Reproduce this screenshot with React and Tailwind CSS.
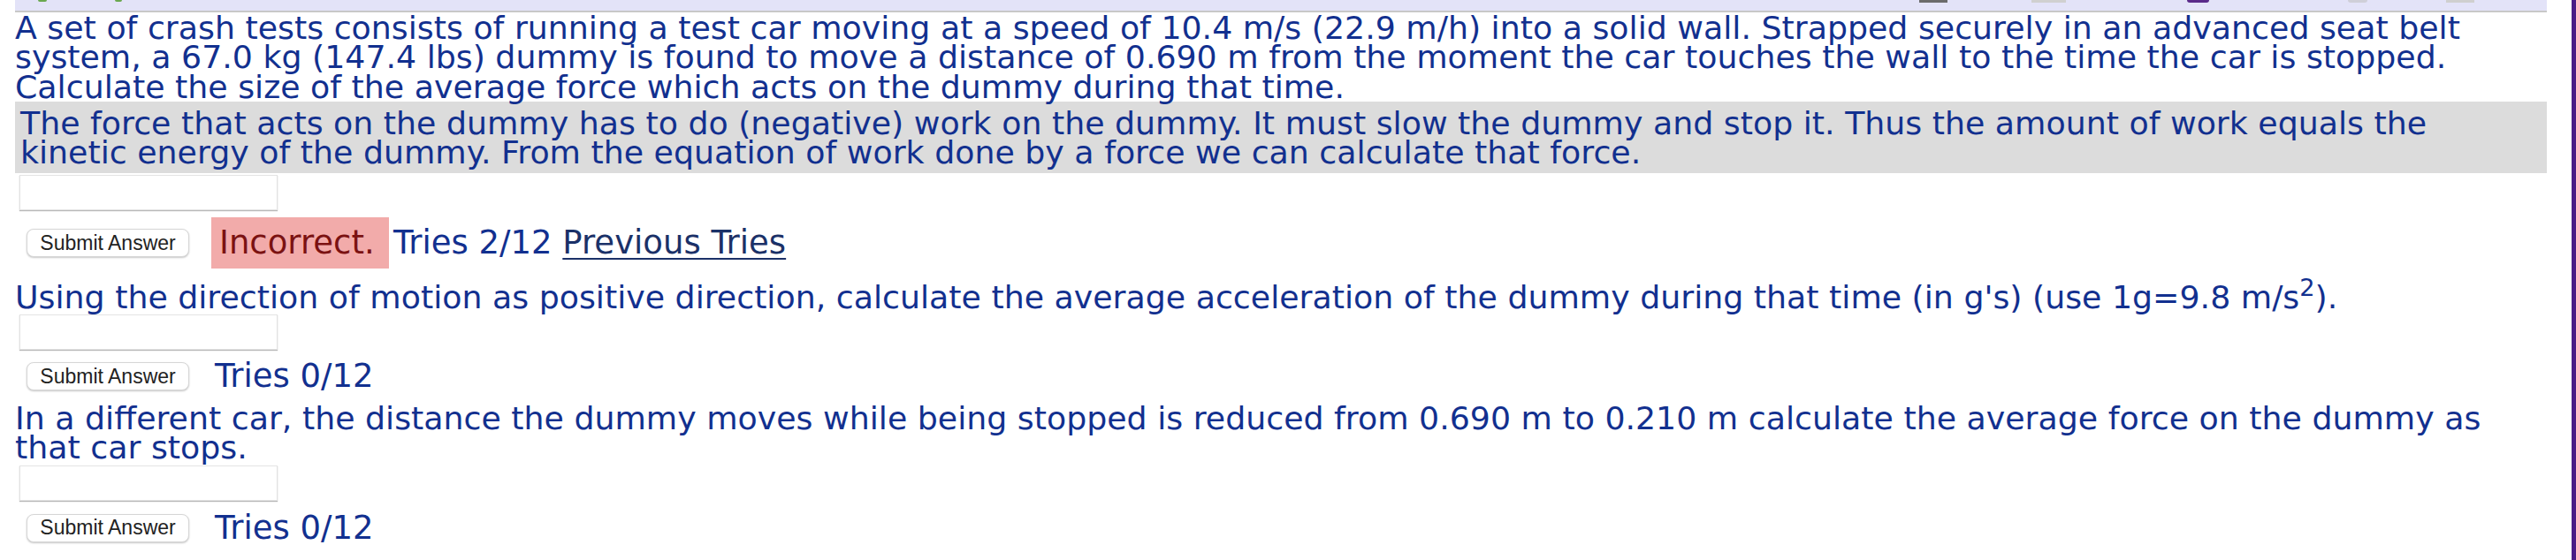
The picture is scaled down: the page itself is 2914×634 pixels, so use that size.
import React from "react";

function AnswerInput({ className = "" }) {
  return (
    <input
      type="text"
      className={
        "block ml-[5px] w-[292px] h-[40px] bg-white border border-[#e3e3e3] shadow-[0_1px_1px_rgba(0,0,0,0.28)] outline-none " +
        className
      }
    />
  );
}

function SubmitButton() {
  return (
    <button
      type="button"
      className="shrink-0 w-[184px] h-[32px] rounded-[8px] border border-[#d6d6d6] bg-white shadow-[0_1px_2px_rgba(0,0,0,0.22)] font-['Liberation_Sans',Arial,sans-serif] text-[23px] leading-none text-[#222222]"
    >
      Submit Answer
    </button>
  );
}

export default function App() {
  return (
    <div className="w-[2914px] h-[634px] bg-white flex overflow-hidden">
      <div className="w-[2909px] pl-[17px] pr-[28px] font-['DejaVu_Sans',Verdana,sans-serif] text-[36.3px] leading-[33.4px] text-[#12308f]">
        {/* header strip (toolbar icons cut off at top) */}
        <div className="h-[14px] bg-[#e3e3f8] border-b-2 border-[#c8c8c8] flex items-start">
          <span className="ml-[26px] w-[10px] h-[2px] rounded-b-full bg-[#6aa84f]" />
          <span className="ml-[77px] w-[8px] h-[2px] rounded-b-full bg-[#6aa84f]" />
          <span className="ml-[2033px] w-[32px] h-[3px] bg-[#6b6b6b]" />
          <span className="ml-[95px] w-[39px] h-[3px] bg-[#d0d0d0]" />
          <span className="ml-[137px] w-[25px] h-[3px] rounded-b-full bg-[#5a2a8a]" />
          <span className="ml-[157px] w-[22px] h-[3px] rounded-b-full bg-[#cfcfd8]" />
          <span className="ml-[89px] w-[32px] h-[3px] bg-[#cfcfcf]" />
        </div>

        <p className="mt-[1px] pr-[20px]">
          A set of crash tests consists of running a test car moving at a speed of 10.4 m/s (22.9 m/h) into a solid wall. Strapped securely in an advanced seat belt system, a 67.0 kg (147.4 lbs) dummy is found to move a distance of 0.690 m from the moment the car touches the wall to the time the car is stopped. Calculate the size of the average force which acts on the dummy during that time.
        </p>

        <div className="bg-[#dcdcdc] pl-[6px] pr-[44px] pt-[7.5px] pb-[6.5px]">
          The force that acts on the dummy has to do (negative) work on the dummy. It must slow the dummy and stop it. Thus the amount of work equals the kinetic energy of the dummy. From the equation of work done by a force we can calculate that force.
        </div>

        <AnswerInput className="mt-[2px]" />

        <div className="mt-[8px] ml-[13px] flex items-center text-[37px] leading-[40px]">
          <SubmitButton />
          <span className="ml-[25px] w-[201px] h-[58px] pl-[9px] flex items-center bg-[#f2abaa] text-[#7b1212]">
            Incorrect.
          </span>
          <span className="ml-[5px] whitespace-nowrap">
            Tries 2/12{" "}
            <a href="#" className="underline decoration-[1.5px] underline-offset-[5px] text-[#1b3168]">
              Previous Tries
            </a>
          </span>
        </div>

        <p className="mt-[16px] pr-[20px]">
          Using the direction of motion as positive direction, calculate the average acceleration of the dummy during that time (in g's) (use 1g=9.8 m/s<sup>2</sup>).
        </p>

        <AnswerInput className="mt-[3px]" />

        <div className="mt-[10px] ml-[13px] flex items-center text-[37px] leading-[40px]">
          <SubmitButton />
          <span className="ml-[29px]">Tries 0/12</span>
        </div>

        <p className="mt-[10.5px] pr-[20px]">
          In a different car, the distance the dummy moves while being stopped is reduced from 0.690 m to 0.210 m calculate the average force on the dummy as that car stops.
        </p>

        <AnswerInput className="mt-[3px]" />

        <div className="mt-[11px] ml-[13px] flex items-center text-[37px] leading-[40px]">
          <SubmitButton />
          <span className="ml-[29px]">Tries 0/12</span>
        </div>
      </div>
      <div className="w-[5px] bg-[#4a1b86]" />
    </div>
  );
}
